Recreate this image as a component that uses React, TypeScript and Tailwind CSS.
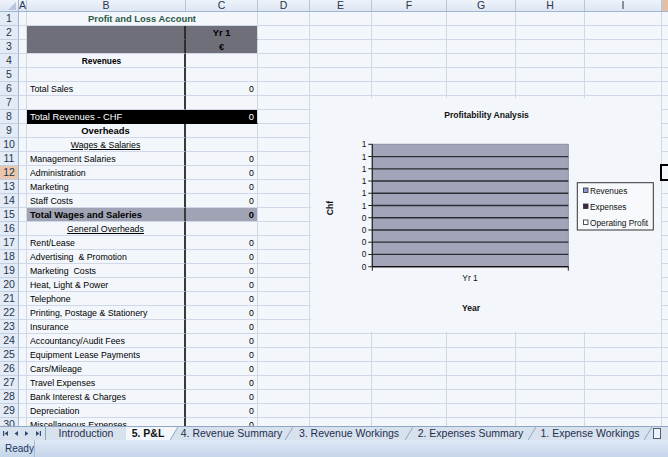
import React from 'react';

type Kind = 'title' | 'grey' | 'head' | 'blank' | 'item' | 'black' | 'sub' | 'total';
type RowDef = { n: number; kind: Kind; label?: string; val?: string };

const ROWS: RowDef[] = [
  { n: 1, kind: 'title', label: 'Profit and Loss Account' },
  { n: 2, kind: 'grey', val: 'Yr 1' },
  { n: 3, kind: 'grey', val: '€' },
  { n: 4, kind: 'head', label: 'Revenues' },
  { n: 5, kind: 'blank' },
  { n: 6, kind: 'item', label: 'Total Sales', val: '0' },
  { n: 7, kind: 'blank' },
  { n: 8, kind: 'black', label: 'Total Revenues - CHF', val: '0' },
  { n: 9, kind: 'head', label: 'Overheads' },
  { n: 10, kind: 'sub', label: 'Wages & Salaries' },
  { n: 11, kind: 'item', label: 'Management Salaries', val: '0' },
  { n: 12, kind: 'item', label: 'Administration', val: '0' },
  { n: 13, kind: 'item', label: 'Marketing', val: '0' },
  { n: 14, kind: 'item', label: 'Staff Costs', val: '0' },
  { n: 15, kind: 'total', label: 'Total Wages and Saleries', val: '0' },
  { n: 16, kind: 'sub', label: 'General Overheads' },
  { n: 17, kind: 'item', label: 'Rent/Lease', val: '0' },
  { n: 18, kind: 'item', label: 'Advertising  & Promotion', val: '0' },
  { n: 19, kind: 'item', label: 'Marketing  Costs', val: '0' },
  { n: 20, kind: 'item', label: 'Heat, Light & Power', val: '0' },
  { n: 21, kind: 'item', label: 'Telephone', val: '0' },
  { n: 22, kind: 'item', label: 'Printing, Postage & Stationery', val: '0' },
  { n: 23, kind: 'item', label: 'Insurance', val: '0' },
  { n: 24, kind: 'item', label: 'Accountancy/Audit Fees', val: '0' },
  { n: 25, kind: 'item', label: 'Equipment Lease Payments', val: '0' },
  { n: 26, kind: 'item', label: 'Cars/Mileage', val: '0' },
  { n: 27, kind: 'item', label: 'Travel Expenses', val: '0' },
  { n: 28, kind: 'item', label: 'Bank Interest & Charges', val: '0' },
  { n: 29, kind: 'item', label: 'Depreciation', val: '0' },
  { n: 30, kind: 'item', label: 'Miscellaneous Expenses', val: '0' },
];

// columns right of C, they only carry gridlines
const REST = ['w-[52px]', 'w-[62px]', 'w-[75px]', 'w-[69px]', 'w-[69px]', 'w-[77px]', 'w-[40px]'];

const HEADERS = [
  { k: 'A', w: 'w-[8px]' },
  { k: 'B', w: 'w-[159px]' },
  { k: 'C', w: 'w-[72px]' },
  { k: 'D', w: 'w-[52px]' },
  { k: 'E', w: 'w-[62px]' },
  { k: 'F', w: 'w-[75px]' },
  { k: 'G', w: 'w-[69px]' },
  { k: 'H', w: 'w-[69px]' },
  { k: 'I', w: 'w-[77px]' },
];

function BC({ r }: { r: RowDef }) {
  const txt = 'flex shrink-0 items-center pt-[1px] leading-none';
  if (r.kind === 'title') {
    return (
      <div className={`${txt} w-[231px] justify-center border-r border-b border-[#d0d8e8] text-[9.4px] font-bold text-[#2b5946]`}>
        {r.label}
      </div>
    );
  }
  if (r.kind === 'grey') {
    return (
      <>
        <div className={`w-[159px] shrink-0 border-r-2 border-b bg-[#6e6f79] border-r-[#2e2e2e] ${r.n === 2 ? 'border-b-[#6e6f79]' : 'border-b-[#d0d8e8]'}`} />
        <div className={`${txt} w-[72px] justify-center border-r border-b bg-[#6e6f79] border-r-[#d0d8e8] text-[9.4px] font-bold text-black ${r.n === 2 ? 'border-b-[#6e6f79]' : 'border-b-[#d0d8e8]'}`}>
          {r.val}
        </div>
      </>
    );
  }
  if (r.kind === 'black') {
    return (
      <>
        <div className={`${txt} w-[159px] whitespace-pre border-b border-r-2 border-black bg-black pl-[3px] text-[9.4px] text-white`}>{r.label}</div>
        <div className={`${txt} w-[72px] justify-end border-b border-r border-b-black border-r-[#d0d8e8] bg-black pr-[3px] text-[9.4px] text-white`}>{r.val}</div>
      </>
    );
  }
  if (r.kind === 'total') {
    return (
      <>
        <div className={`${txt} w-[159px] whitespace-pre border-b border-r-2 border-b-[#d0d8e8] border-r-[#3a3a3a] bg-[#a0a3b3] pl-[3px] text-[9.4px] font-bold text-black`}>{r.label}</div>
        <div className={`${txt} w-[72px] justify-end border-b border-r border-[#d0d8e8] bg-[#a0a3b3] pr-[3px] text-[9.4px] font-bold text-black`}>{r.val}</div>
      </>
    );
  }
  let b: React.ReactNode = null;
  let bCls = 'pl-[3px] text-[8.8px] text-black';
  if (r.kind === 'head') {
    b = r.label;
    bCls = `justify-center font-bold text-black ${r.n === 4 ? 'pr-[8px] text-[8.4px]' : 'text-[9.4px]'}`;
  } else if (r.kind === 'sub') {
    b = <span className="underline underline-offset-[1px]">{r.label}</span>;
    bCls = 'justify-center text-[8.8px] text-black';
  } else if (r.kind === 'item') {
    b = r.label;
  }
  return (
    <>
      <div className={`${txt} w-[159px] overflow-visible whitespace-pre border-b border-r-2 border-b-[#d0d8e8] border-r-[#3a3a3a] ${bCls}`}>{b}</div>
      <div className={`${txt} w-[72px] justify-end border-b border-r border-[#d0d8e8] pr-[3px] text-[8.8px] text-black`}>{r.val}</div>
    </>
  );
}

function SheetRow({ r }: { r: RowDef }) {
  const sel = r.n === 12;
  return (
    <div className="flex h-[14px]">
      <div
        className={`flex w-[19px] shrink-0 items-center justify-center border-r border-b border-r-[#9eb6ce] border-b-[#c3d0e2] text-[10.5px] leading-none text-[#27364a] ${sel ? 'bg-[#eac6ad]' : 'bg-[#e3ebf6]'}`}
      >
        {r.n}
      </div>
      <div className="w-[8px] shrink-0 border-r border-b border-[#d0d8e8]" />
      <BC r={r} />
      {REST.map((w, i) => (
        <div key={i} className={`${w} shrink-0 border-r border-b border-[#d0d8e8]`} />
      ))}
    </div>
  );
}

function Chart() {
  const top = 46.3;
  const bottom = 168.7;
  const left = 62.3;
  const right = 258.3;
  const step = (bottom - top) / 10;
  const labels = ['1', '1', '1', '1', '1', '1', '0', '0', '0', '0', '0'];
  return (
    <div className="absolute left-[311px] top-[98px] h-[234px] w-[350px] bg-[#f3f7fb]">
      <svg width="350" height="234" fontFamily="'Liberation Sans', Arial, sans-serif" className="-ml-px">
        <text x="176.5" y="20" textAnchor="middle" fontSize="8.6" fontWeight="bold" fill="#111">
          Profitability Analysis
        </text>
        <rect x={left} y={top} width={right - left} height={bottom - top} fill="#a2a5b9" stroke="#8e909c" strokeWidth="1" />
        {labels.map((l, i) => {
          const y = top + i * step;
          return (
            <g key={i}>
              {i > 0 && <line x1={left} x2={right} y1={y} y2={y} stroke="#2c2c33" strokeWidth="1.3" />}
              <line x1={left - 4} x2={left} y1={y} y2={y} stroke="#222" strokeWidth="1" />
              <text x={left - 6} y={y + 3} textAnchor="end" fontSize="8.4" fill="#111">
                {l}
              </text>
            </g>
          );
        })}
        <line x1={left} x2={left} y1={top} y2={bottom} stroke="#222" strokeWidth="1.2" />
        <line x1={left} x2={right} y1={bottom} y2={bottom} stroke="#111" strokeWidth="1.2" />
        <line x1={left} x2={left} y1={bottom} y2={bottom + 4} stroke="#222" />
        <line x1={right} x2={right} y1={bottom} y2={bottom + 4} stroke="#222" />
        <text x="160" y="182.5" textAnchor="middle" fontSize="8.4" fill="#111">
          Yr 1
        </text>
        <text x="161" y="213" textAnchor="middle" fontSize="8.6" fontWeight="bold" fill="#111">
          Year
        </text>
        <text x="20" y="113" textAnchor="middle" fontSize="8.6" fontWeight="bold" fill="#111" transform="rotate(-90 20 110)">
          Chf
        </text>
        <rect x="267.3" y="84.7" width="76" height="47.3" fill="#f7f9fc" stroke="#333" strokeWidth="1" />
        <rect x="273.5" y="90" width="4.5" height="4.5" fill="#8d9bd0" stroke="#2a2a3a" strokeWidth="0.8" />
        <rect x="273.5" y="106" width="4.5" height="4.5" fill="#3a2c3c" stroke="#2a2a3a" strokeWidth="0.8" />
        <rect x="273.5" y="122" width="4.5" height="4.5" fill="#ffffff" stroke="#2a2a3a" strokeWidth="0.8" />
        <text x="280" y="95.8" fontSize="8.3" fill="#111">Revenues</text>
        <text x="280" y="111.8" fontSize="8.3" fill="#111">Expenses</text>
        <text x="280" y="127.8" fontSize="8.3" fill="#111">Operating Profit</text>
      </svg>
    </div>
  );
}

function NavArrows() {
  return (
    <svg width="45" height="13" className="shrink-0">
      <g fill="#2f4a72">
        <rect x="3" y="4" width="1.2" height="5" />
        <polygon points="8,4 8,9 4.6,6.5" />
        <polygon points="18,4 18,9 14.6,6.5" />
        <polygon points="25,4 25,9 28.4,6.5" />
        <polygon points="36,4 36,9 39.4,6.5" />
        <rect x="39.8" y="4" width="1.2" height="5" />
      </g>
    </svg>
  );
}

function Slant({ active }: { active?: boolean }) {
  return (
    <svg width="8" height="13" className="shrink-0">
      {active && <polygon points="0,0 8,0 0,13" fill="#f3f7fc" />}
      <line x1="0" y1="13" x2="8" y2="0" stroke="#8fa5c2" strokeWidth="1" />
    </svg>
  );
}

export default function App() {
  return (
    <div className="flex h-[457px] w-[668px] flex-col overflow-hidden bg-[#f3f7fb] font-['Liberation_Sans',Arial,sans-serif]">
      <div className="relative h-[426px] shrink-0 overflow-hidden">
        <div className="flex h-[12px] border-b border-[#9eb6ce] bg-linear-to-b from-[#eef3fa] to-[#dde6f2]">
          <div className="relative w-[19px] shrink-0 border-r border-[#9eb6ce]">
            <svg width="19" height="11" className="absolute left-0 top-0">
              <polygon points="16,2 16,10 8,10" fill="#b9c7da" />
            </svg>
          </div>
          {HEADERS.map((h) => (
            <div
              key={h.k}
              className={`${h.w} flex shrink-0 items-center justify-center overflow-visible border-r border-[#b5c5da] text-[10.5px] leading-none text-[#27364a]`}
            >
              {h.k}
            </div>
          ))}
          <div className="w-[40px] shrink-0 bg-[#e2bfa8]" />
        </div>
        {ROWS.map((r) => (
          <SheetRow key={r.n} r={r} />
        ))}
        <Chart />
        <div className="absolute left-[660px] top-[164px] h-[17px] w-[14px] border-2 border-black" />
      </div>

      <div className="flex h-[14px] shrink-0 items-stretch border-t border-[#8fa6c4] bg-[#d8e2ef] text-[10.5px] leading-none text-[#1d2f4d]">
        <NavArrows />
        <div className="flex w-[81px] shrink-0 items-center justify-center border-l border-[#8fa5c2]">Introduction</div>
        <div className="flex w-[44px] shrink-0 items-center justify-center bg-[#f3f7fc] font-bold text-[#111]">5. P&amp;L</div>
        <Slant active />
        <div className="flex w-[107px] shrink-0 items-center justify-center">4. Revenue Summary</div>
        <Slant />
        <div className="flex w-[112px] shrink-0 items-center justify-center">3. Revenue Workings</div>
        <Slant />
        <div className="flex w-[115px] shrink-0 items-center justify-center">2. Expenses Summary</div>
        <Slant />
        <div className="flex w-[108px] shrink-0 items-center justify-center">1. Expense Workings</div>
        <Slant />
        <div className="ml-[1px] mt-[1px] h-[11px] w-[8px] shrink-0 border border-[#4b5f7c] bg-[#eef3fa]" />
      </div>

      <div className="flex h-[17px] shrink-0 items-center bg-linear-to-b from-[#dfe9f6] to-[#c5d5ea] text-[10px] leading-none text-[#1b365d]">
        <span className="w-[34px] pl-[5px]">Ready</span>
        <div className="h-full w-px bg-[#a9bcd4]" />
      </div>
    </div>
  );
}
